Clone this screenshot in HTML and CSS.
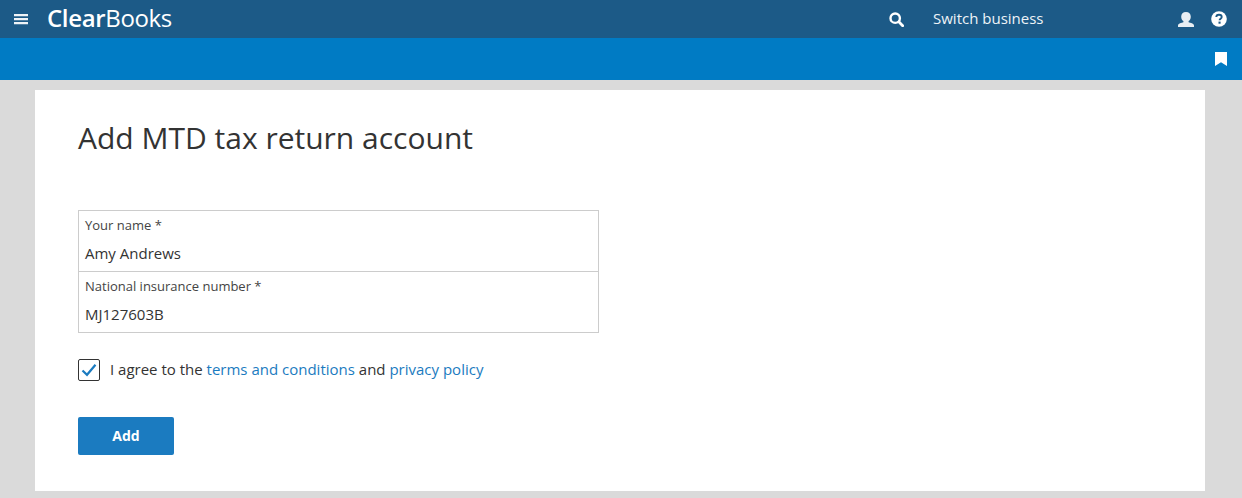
FILE: index.html
```html
<!DOCTYPE html>
<html lang="en">
<head>
<meta charset="utf-8">
<title>Add MTD tax return account</title>
<link rel="stylesheet" href="styles.css">
</head>
<body>
<header class="topbar">
  <svg class="icon-menu" width="14" height="12" viewBox="0 0 14 12"><path d="M0 1h14v2.200H0zM0 5h14v2.200H0zM0 9h14v2.200H0z" fill="#eef3f7"/></svg>
  <div class="logo"><span class="logo-bold">Clear</span>Books</div>
  <svg class="icon-search" width="15" height="15" viewBox="0 0 15 15"><circle cx="6.200" cy="6.200" r="4.700" fill="none" stroke="#fff" stroke-width="2.400"/><path d="M9.800 9.800l3.900 3.900" stroke="#fff" stroke-width="2.800" stroke-linecap="round"/></svg>
  <div class="switch">Switch business</div>
  <svg class="icon-user" width="16" height="15" viewBox="0 0 16 15"><path d="M8 0c3 0 4.800 2 4.800 4.700 0 2-1 3.600-2.200 4.400v1.100c1.800.5 5.400 1.200 5.400 3.300V15H0v-1.500c0-2.100 3.600-2.800 5.400-3.300V9.100C4.200 8.300 3.200 6.700 3.200 4.700 3.200 2 5 0 8 0z" fill="#e8eef3"/></svg>
  <svg class="icon-help" width="16" height="16" viewBox="0 0 16 16"><circle cx="8" cy="8" r="7.800" fill="#fff"/><path d="M5.300 6.100c0-1.500 1.100-2.400 2.700-2.400s2.700.9 2.700 2.300c0 1.800-2.100 1.700-2.100 3.300" fill="none" stroke="#1c5a87" stroke-width="1.900"/><rect x="7.500" y="10.600" width="2.100" height="2.100" fill="#1c5a87"/></svg>
</header>
<div class="subbar">
  <svg width="12" height="14" viewBox="0 0 12 14"><path d="M0 0h12v14L6 10.200 0 14z" fill="#fff"/></svg>
</div>
<main class="card">
  <h1 class="title">Add MTD tax return account</h1>
  <form class="form">
    <div class="fields">
      <div class="field">
        <label class="field-label">Your name *</label>
        <div class="field-value">Amy Andrews</div>
      </div>
      <div class="field">
        <label class="field-label">National insurance number *</label>
        <div class="field-value">MJ127603B</div>
      </div>
    </div>
    <div class="agree">
      <span class="checkbox"><svg width="16" height="14" viewBox="0 0 16 14"><path d="M1.500 7.500l4.500 4.300L14.500 1.800" fill="none" stroke="#1b7bc0" stroke-width="2.200"/></svg></span>
      <span class="agree-text">I agree to the <a class="link" href="#">terms and conditions</a> and <a class="link" href="#">privacy policy</a></span>
    </div>
    <button class="btn" type="button">Add</button>
  </form>
</main>
</body>
</html>
```

FILE: styles.css
```css
* { box-sizing: border-box; }
html, body { margin: 0; padding: 0; }
body {
  background: #dadada;
  font-family: "Open Sans", sans-serif;
  color: #333;
  height: 498px;
  overflow: hidden;
}
.topbar {
  height: 38px;
  background: #1c5a87;
  display: flex;
  align-items: center;
  color: #fff;
}
.icon-menu { margin-left: 14px; }
.logo {
  margin-left: 19px;
  font-family: "Open Sans", sans-serif;
  font-size: 24px;
  letter-spacing: -0.35px;
  font-weight: 400;
  line-height: 36px;
  height: 38px;
  width: 842px;
}
.logo-bold { font-weight: 600; }
.switch { margin-left: 29px; font-size: 15px; line-height: 36px; height: 38px; width: 245px; color: #eef3f7; }
.icon-user { margin-right: 17px; }
.subbar {
  height: 42px;
  background: #007bc4;
  display: flex;
  justify-content: flex-end;
  align-items: center;
  padding-right: 15px;
}
.card {
  width: 1170px;
  height: 401px;
  margin: 10px 0 0 35px;
  background: #fff;
  padding: 0 43px;
  overflow: hidden;
}
.title {
  margin: 28px 0 0;
  font-size: 30px;
  font-weight: 400;
  line-height: 40px;
  color: #333;
}
.form { margin-top: 52px; width: 521px; }
.fields { border: 1px solid #ccc; border-bottom-width: 0; }
.field {
  height: 61px;
  border-bottom: 1px solid #ccc;
  padding: 5px 6px 0;
}
.field-label { display: block; font-size: 13px; line-height: 18px; color: #444; }
.field-value { margin-top: 9px; font-size: 15px; line-height: 20px; color: #333; }
.agree {
  display: flex;
  align-items: center;
  margin-top: 26px;
  font-size: 15px;
  width: 600px;
}
.agree-text { line-height: 20px; padding-bottom: 2px; }
.checkbox {
  width: 22px;
  height: 22px;
  border: 1px solid #333;
  border-radius: 2px;
  margin-right: 10px;
  display: flex;
  align-items: center;
  justify-content: center;
}
.link { color: #1b7bc0; text-decoration: none; }
.btn {
  display: block;
  margin-top: 36px;
  width: 96px;
  height: 38px;
  padding: 0 0 1px;
  background: #1b7bc0;
  border: 0;
  border-radius: 2px;
  color: #fff;
  font-family: "Open Sans", sans-serif;
  font-size: 14px;
  font-weight: 700;
}
```
